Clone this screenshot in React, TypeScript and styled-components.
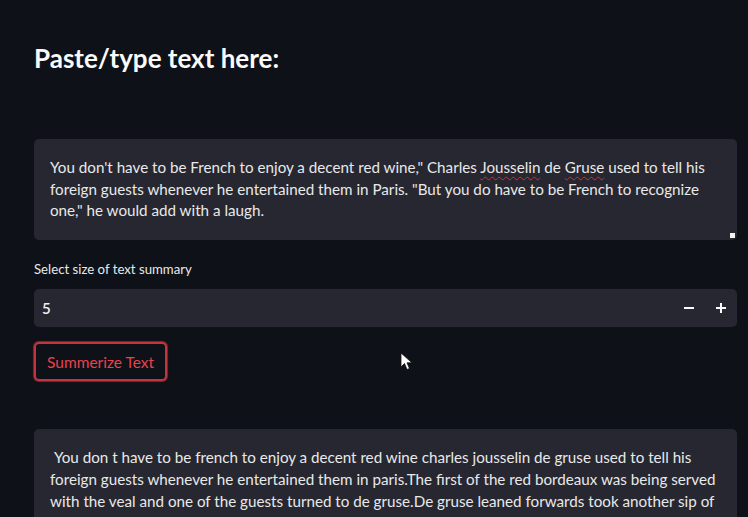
import React, {useState} from 'react'
import styled, {createGlobalStyle} from 'styled-components'

const summary =
  ' You don t have to be french to enjoy a decent red wine charles jousselin de gruse used to tell his foreign guests whenever he entertained them in paris.The first of the red bordeaux was being served with the veal and one of the guests turned to de gruse.De gruse leaned forwards took another sip of his wine and said'

export default function App() {
  const [size, setSize] = useState(5)

  return (
    <Main>
      <GlobalStyle />
      <Headline>Paste/type text here:</Headline>
      <TextBox>
        <p>
          You don't have to be French to enjoy a decent red wine," Charles{' '}
          <Misspelled>Jousselin</Misspelled> de <Misspelled>Gruse</Misspelled>{' '}
          used to tell his foreign guests whenever he entertained them in Paris.
          "But you do have to be French to recognize one," he would add with a
          laugh.
        </p>
        <ResizeHandle />
      </TextBox>
      <Label>Select size of text summary</Label>
      <NumberField>
        <span>{size}</span>
        <Steppers>
          <Step onClick={() => setSize((s) => s - 1)}>
            <svg width="10" height="10" viewBox="0 0 10 10">
              <rect x="0" y="4" width="10" height="2" fill="#fafafa" />
            </svg>
          </Step>
          <Step onClick={() => setSize((s) => s + 1)}>
            <svg width="10" height="10" viewBox="0 0 10 10">
              <rect x="0" y="4" width="10" height="2" fill="#fafafa" />
              <rect x="4" y="0" width="2" height="10" fill="#fafafa" />
            </svg>
          </Step>
        </Steppers>
      </NumberField>
      <ButtonRow>
        <Button>Summerize Text</Button>
        <Pointer width="13" height="19" viewBox="0 0 13 19">
          <path
            d="M1 1 L1 15 L4.5 11.5 L7 17.5 L9.5 16.5 L7 10.8 L12 10.8 Z"
            fill="#ffffff"
            stroke="#111"
            strokeWidth="0.8"
          />
        </Pointer>
      </ButtonRow>
      <OutputBox>{summary}</OutputBox>
    </Main>
  )
}

const GlobalStyle = createGlobalStyle`
  html, body {
    margin: 0;
    background: #0e1117;
    overflow: hidden;
  }
  body {
    font-family: Lato, "Open Sans", sans-serif;
    color: #fafafa;
  }
`

const Main = styled.main`
  display: flex;
  flex-direction: column;
  padding: 40px 11px 0 34px;

  > * {
    flex-shrink: 0;
  }
`

const Headline = styled.h2`
  margin: 0;
  font-size: 26px;
  font-weight: 700;
  line-height: 36px;
  color: #fafafa;
`

const TextBox = styled.div`
  position: relative;
  margin-top: 63px;
  height: 101px;
  box-sizing: border-box;
  background: #262730;
  border-radius: 5px;
  padding: 18px 16px 0;
  font-size: 15.2px;
  line-height: 21.5px;
  color: #e9e9ea;

  p {
    margin: 0;
  }
`

const Misspelled = styled.span`
  text-decoration: underline wavy #c7313a;
  text-decoration-thickness: 1px;
  text-underline-offset: 3px;
`

const ResizeHandle = styled.span`
  position: absolute;
  right: 2px;
  bottom: 2px;
  width: 5px;
  height: 5px;
  background: #f4f4f4;
`

const Label = styled.label`
  margin-top: 20px;
  font-size: 13.2px;
  line-height: 18px;
  color: #e9e9ea;
`

const NumberField = styled.div`
  display: flex;
  align-items: center;
  justify-content: space-between;
  margin-top: 11px;
  height: 38px;
  background: #262730;
  border-radius: 5px;
  padding: 0 0 0 8px;
  font-size: 15px;
  font-weight: 600;
  color: #f0f0f0;
`

const Steppers = styled.div`
  display: flex;
  height: 100%;
`

const Step = styled.button`
  display: flex;
  align-items: center;
  justify-content: center;
  width: 32px;
  height: 100%;
  border: none;
  background: transparent;
  padding: 0;
  cursor: pointer;
`

const ButtonRow = styled.div`
  position: relative;
  display: flex;
  margin-top: 15px;
`

const Button = styled.button`
  height: 39px;
  padding: 0 11px;
  border: 2px solid #c3353d;
  border-radius: 5px;
  box-shadow: 0 0 0 1px rgba(195, 53, 61, 0.5), 0 0 3px rgba(195, 53, 61, 0.4);
  background: #0e1117;
  color: #e8434d;
  font-family: Lato, "Open Sans", sans-serif;
  font-size: 15.5px;
  cursor: pointer;
`

const Pointer = styled.svg`
  position: absolute;
  left: 366px;
  top: 10px;
`

const OutputBox = styled.div`
  margin-top: 48px;
  background: #262730;
  border-radius: 5px;
  padding: 17px 16px;
  font-size: 15.2px;
  line-height: 22px;
  color: #e9e9ea;
  white-space: pre-wrap;
`
